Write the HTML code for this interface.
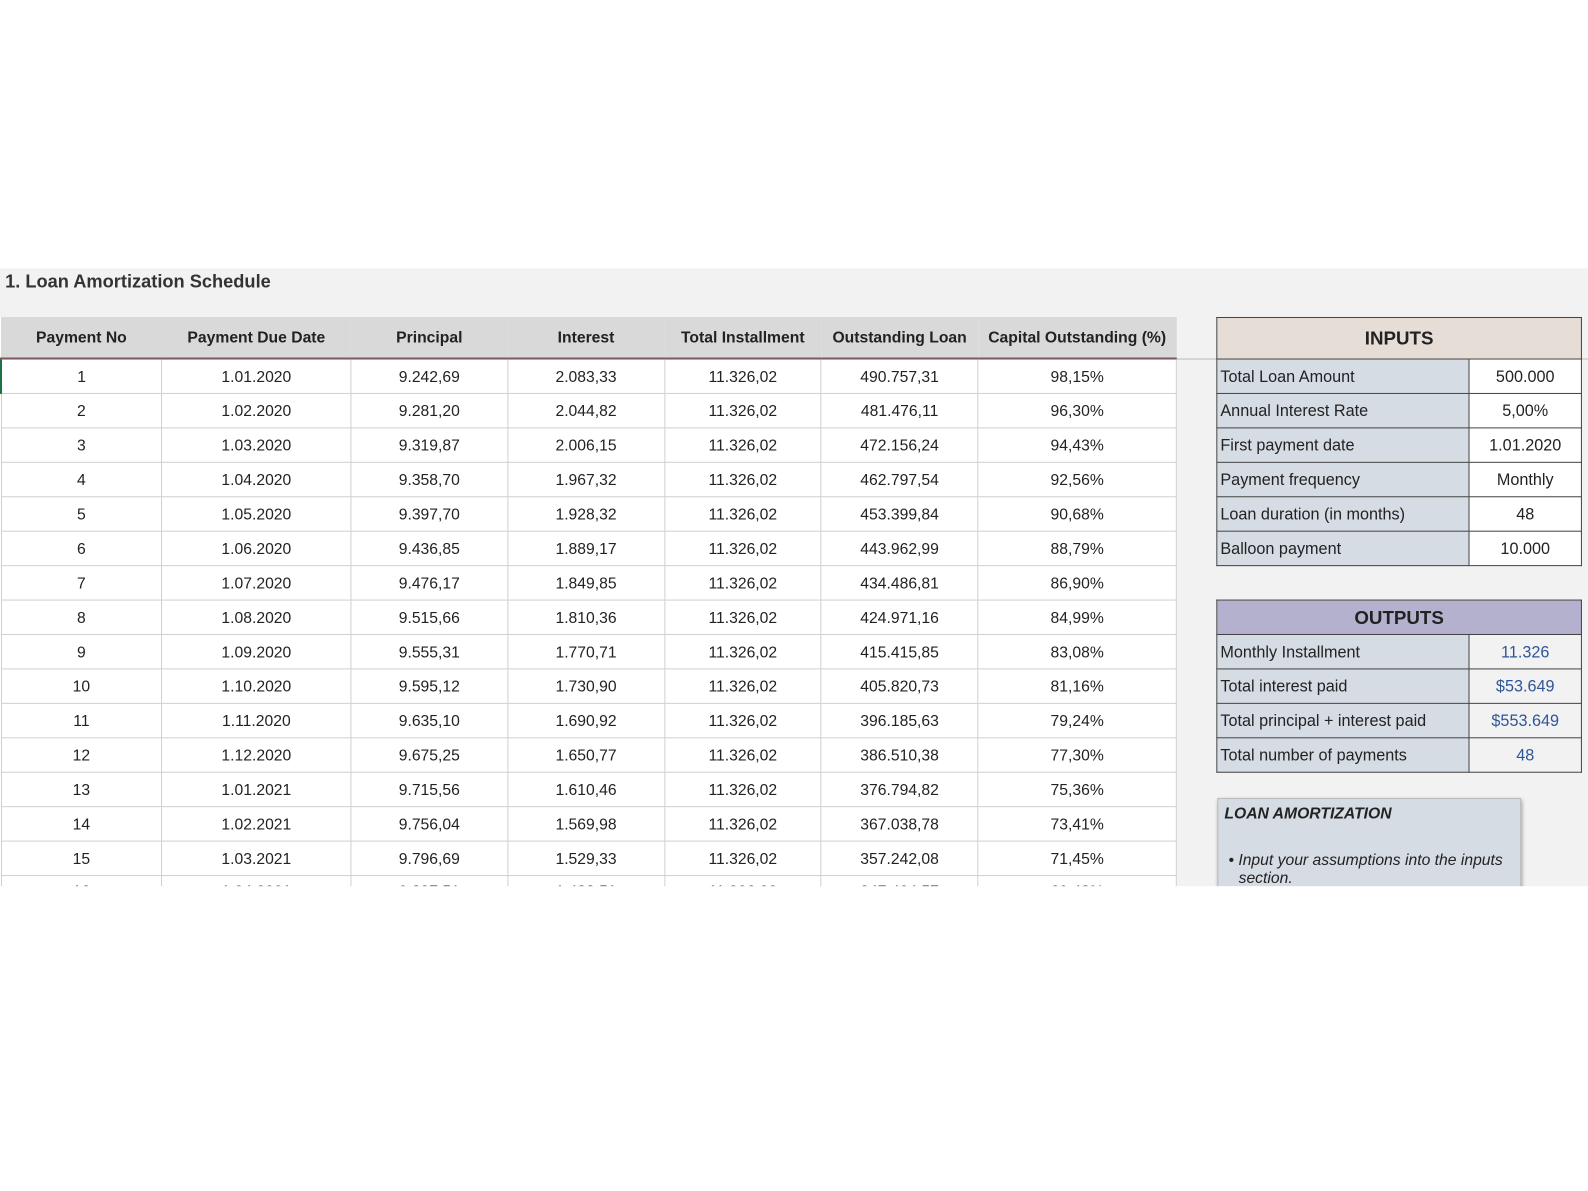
<!DOCTYPE html>
<html><head><meta charset="utf-8"><style>
*{margin:0;padding:0;box-sizing:border-box}
body{width:1588px;height:1191px;background:#fff;position:relative;overflow:hidden;font-family:"Liberation Sans",sans-serif;color:#222}
#wrap{position:absolute;left:0;top:0;width:1568px;height:1176px;transform:scale(1.01276);transform-origin:0 0}
#sheet{position:absolute;left:0;top:265px;width:1568px;height:610px;background:#f2f2f2;overflow:hidden}
.title{position:absolute;left:5px;top:3px;font-size:18px;font-weight:bold;color:#333}
table{border-collapse:collapse;position:absolute}
#main{left:0;top:48px;width:1162px;background:#fff}
#main th{background:#d9d9d9;height:41px;font-size:15.5px;font-weight:bold;color:#222;border-bottom:2px solid #7a5a5f;padding-top:2px}
#main td{height:34px;font-size:15.5px;text-align:center;border:1px solid #d0d0d0;border-top:none;padding:3px 0 0 0}
#main tr.g td:first-child{border-left:2px solid #1e7145}
#main tr.last td{vertical-align:top;padding-top:7px}
.hl{position:absolute;left:1162px;top:89px;width:426px;height:1px;background:#bbb}
.box{left:1201px;width:361px}
.box th{height:41px;font-size:18.5px;font-weight:bold;border:1px solid #444}
.box td{height:34px;font-size:16px;border:1px solid #444;padding-top:2px}
.box td.l{background:#d6dce4;width:249px;padding-left:3px;text-align:left}
.box td.v{background:#fff;text-align:center}
#out td.v{background:#f2f2f2;color:#2f5597}
.note{position:absolute;left:1202px;top:523px;width:300px;height:120px;background:#d6dce4;border:1px solid #bbb;box-shadow:1px 2px 4px #888;font-style:italic;font-size:15.5px;color:#222;padding:6px 6px}
</style></head><body>
<div id="wrap">
<div id="sheet">
<div class="title">1. Loan Amortization Schedule</div>
<table id="main">
<colgroup><col style="width:159px"><col style="width:187px"><col style="width:155px"><col style="width:155px"><col style="width:155px"><col style="width:155px"><col style="width:196px"></colgroup>
<tr><th>Payment No</th><th>Payment Due Date</th><th>Principal</th><th>Interest</th><th>Total Installment</th><th>Outstanding Loan</th><th>Capital Outstanding (%)</th></tr>
<tr class="g"><td>1</td><td>1.01.2020</td><td>9.242,69</td><td>2.083,33</td><td>11.326,02</td><td>490.757,31</td><td>98,15%</td></tr>
<tr><td>2</td><td>1.02.2020</td><td>9.281,20</td><td>2.044,82</td><td>11.326,02</td><td>481.476,11</td><td>96,30%</td></tr>
<tr><td>3</td><td>1.03.2020</td><td>9.319,87</td><td>2.006,15</td><td>11.326,02</td><td>472.156,24</td><td>94,43%</td></tr>
<tr><td>4</td><td>1.04.2020</td><td>9.358,70</td><td>1.967,32</td><td>11.326,02</td><td>462.797,54</td><td>92,56%</td></tr>
<tr><td>5</td><td>1.05.2020</td><td>9.397,70</td><td>1.928,32</td><td>11.326,02</td><td>453.399,84</td><td>90,68%</td></tr>
<tr><td>6</td><td>1.06.2020</td><td>9.436,85</td><td>1.889,17</td><td>11.326,02</td><td>443.962,99</td><td>88,79%</td></tr>
<tr><td>7</td><td>1.07.2020</td><td>9.476,17</td><td>1.849,85</td><td>11.326,02</td><td>434.486,81</td><td>86,90%</td></tr>
<tr><td>8</td><td>1.08.2020</td><td>9.515,66</td><td>1.810,36</td><td>11.326,02</td><td>424.971,16</td><td>84,99%</td></tr>
<tr><td>9</td><td>1.09.2020</td><td>9.555,31</td><td>1.770,71</td><td>11.326,02</td><td>415.415,85</td><td>83,08%</td></tr>
<tr><td>10</td><td>1.10.2020</td><td>9.595,12</td><td>1.730,90</td><td>11.326,02</td><td>405.820,73</td><td>81,16%</td></tr>
<tr><td>11</td><td>1.11.2020</td><td>9.635,10</td><td>1.690,92</td><td>11.326,02</td><td>396.185,63</td><td>79,24%</td></tr>
<tr><td>12</td><td>1.12.2020</td><td>9.675,25</td><td>1.650,77</td><td>11.326,02</td><td>386.510,38</td><td>77,30%</td></tr>
<tr><td>13</td><td>1.01.2021</td><td>9.715,56</td><td>1.610,46</td><td>11.326,02</td><td>376.794,82</td><td>75,36%</td></tr>
<tr><td>14</td><td>1.02.2021</td><td>9.756,04</td><td>1.569,98</td><td>11.326,02</td><td>367.038,78</td><td>73,41%</td></tr>
<tr><td>15</td><td>1.03.2021</td><td>9.796,69</td><td>1.529,33</td><td>11.326,02</td><td>357.242,08</td><td>71,45%</td></tr>
<tr class="last"><td>16</td><td>1.04.2021</td><td>9.837,51</td><td>1.488,51</td><td>11.326,02</td><td>347.404,57</td><td>69,48%</td></tr>
</table>
<div class="hl"></div>
<table class="box" style="top:48px">
<tr><th colspan="2" style="background:#e7ddd7">INPUTS</th></tr>
<tr><td class="l">Total Loan Amount</td><td class="v">500.000</td></tr>
<tr><td class="l">Annual Interest Rate</td><td class="v">5,00%</td></tr>
<tr><td class="l">First payment date</td><td class="v">1.01.2020</td></tr>
<tr><td class="l">Payment frequency</td><td class="v">Monthly</td></tr>
<tr><td class="l">Loan duration (in months)</td><td class="v">48</td></tr>
<tr><td class="l">Balloon payment</td><td class="v">10.000</td></tr>
</table>
<table class="box" id="out" style="top:327px">
<tr><th colspan="2" style="background:#b4b1cf;height:34px">OUTPUTS</th></tr>
<tr><td class="l">Monthly Installment</td><td class="v">11.326</td></tr>
<tr><td class="l">Total interest paid</td><td class="v">$53.649</td></tr>
<tr><td class="l">Total principal + interest paid</td><td class="v">$553.649</td></tr>
<tr><td class="l">Total number of payments</td><td class="v">48</td></tr>
</table>
<div class="note"><b>LOAN AMORTIZATION</b><br><br><div style="padding-left:14px;text-indent:-10px;margin-top:10px">• Input your assumptions into the inputs section.</div></div>
</div>
</div>
</body></html>
